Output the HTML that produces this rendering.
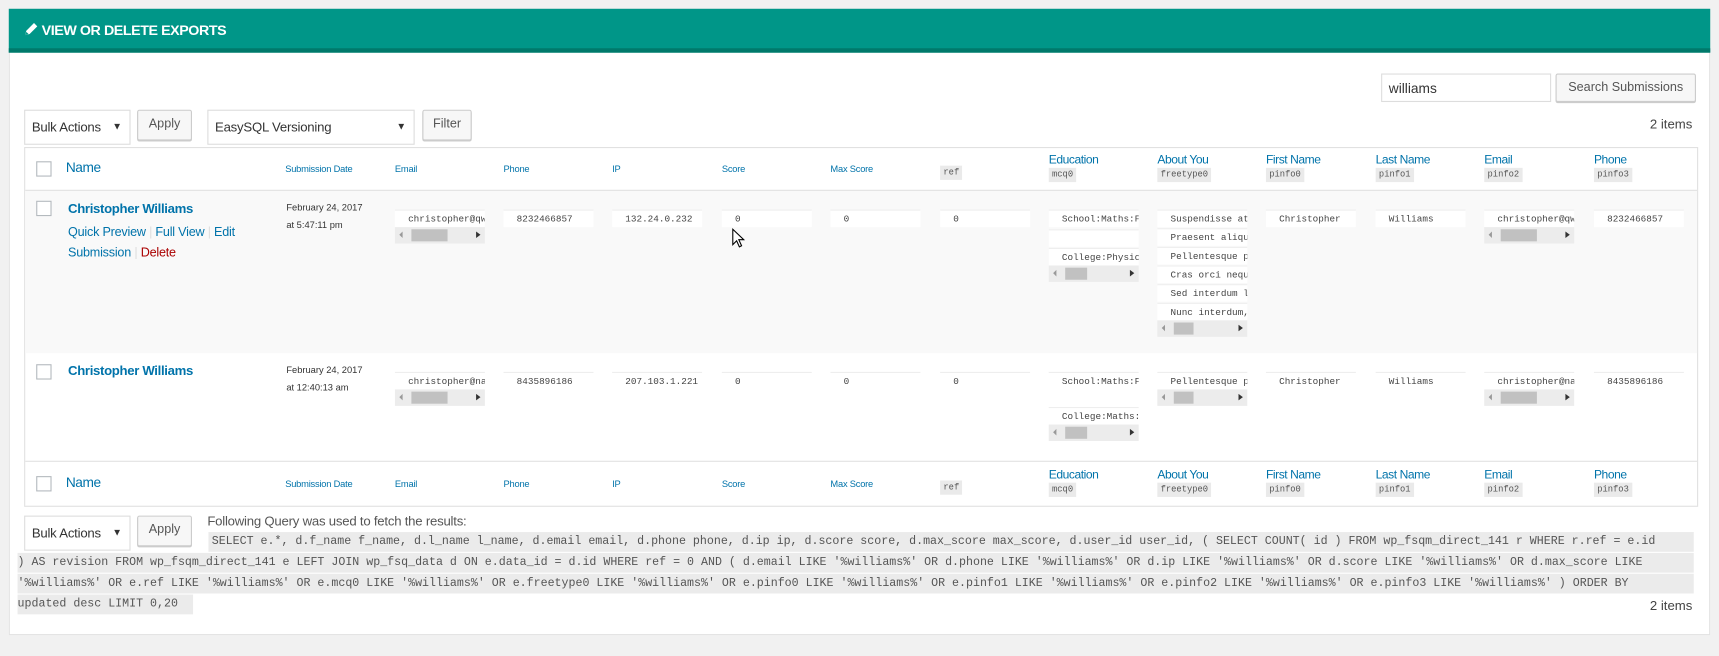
<!DOCTYPE html>
<html><head><meta charset="utf-8"><style>
html,body{margin:0;padding:0;background:#f1f1f1;width:1719px;height:656px;overflow:hidden}
#w{position:absolute;left:0;top:0;width:1567px;height:598px;transform:scale(1.097);transform-origin:0 0;font-family:"Liberation Sans",sans-serif;color:#444}
.a{position:absolute;white-space:nowrap}
#panel{left:8px;top:8px;width:1551px;height:571px;background:#fff;border:1px solid #e2e2e2;box-sizing:border-box}
#hd{left:8px;top:8px;width:1551px;height:36px;background:#009688;border-bottom:4px solid #00796b}
#hd span{position:absolute;left:30px;top:12px;color:#fff;font-weight:bold;font-size:13px;letter-spacing:-.4px}
.btn{background:#f7f7f7;border:1px solid #ccc;border-radius:2px;box-shadow:0 1px 0 #ccc;font-size:11.5px;color:#555;text-align:center;box-sizing:border-box}
.sel{background:#fff;border:1px solid #ddd;font-size:12px;color:#333;box-sizing:border-box;padding:8px 0 0 6px;letter-spacing:-.2px}
.sel i{position:absolute;right:7px;top:9px;font-style:normal;font-size:9px}
.cb{width:14px;height:14px;border:1px solid #b4b9be;background:#fff;box-sizing:border-box}
.lk{color:#0073aa}
.th{font-size:8.5px;color:#0073aa;letter-spacing:-.2px}
.th2{font-size:11px;color:#0073aa;letter-spacing:-.4px}
.code{font-family:"Liberation Mono",monospace;font-size:8px;background:#eaeaea;color:#555;padding:2px 3px}
.in{width:82px;height:16px;background:#fff;border-top:1px solid #eee;font-family:"Liberation Mono",monospace;font-size:8.5px;color:#444;line-height:16px;box-sizing:border-box;padding-left:12px;white-space:nowrap;overflow:hidden}
.sb{width:82px;height:15px;background:#ececec}
.sb b{position:absolute;left:15px;top:2px;width:33px;height:11px;background:#c1c1c1}
.sb:before{content:"";position:absolute;left:4px;top:4px;border:3px solid transparent;border-right:3px solid #999;border-left:0}
.sb:after{content:"";position:absolute;right:4px;top:4px;border:3px solid transparent;border-left:4px solid #333;border-right:0}
.q{font-family:"Liberation Mono",monospace;font-size:10.6px;color:#555;background:#ebebeb;white-space:nowrap;height:18px;line-height:18px;overflow:hidden}
</style></head><body><div id="w">
<div id="panel" class="a"></div>
<div id="hd" class="a"><span><svg width="13" height="13" viewBox="0 0 13 13" style="position:absolute;left:-16px;top:0px"><path d="M1 12 L2 8 L9 1 L12 4 L5 11 Z" fill="#fff"/><path d="M1 12 L2 9 L4 11 Z" fill="#009688"/></svg>VIEW OR DELETE EXPORTS</span></div>

<div class="a" style="left:1259px;top:67px;width:155px;height:26px;background:#fff;border:1px solid #ddd;box-sizing:border-box;font-size:12.5px;color:#333;padding:6px 0 0 6px">williams</div>
<div class="a btn" style="left:1418px;top:67px;width:128px;height:26px;padding-top:6px">Search Submissions</div>
<div class="a" style="left:1504px;top:106px;font-size:12px;color:#444">2 items</div>

<div class="a sel" style="left:22px;top:100px;width:97px;height:32px">Bulk Actions<i>▼</i></div>
<div class="a btn" style="left:125px;top:100px;width:50px;height:28px;padding-top:6px">Apply</div>
<div class="a sel" style="left:189px;top:100px;width:189px;height:32px">EasySQL Versioning<i>▼</i></div>
<div class="a btn" style="left:385px;top:100px;width:45px;height:28px;padding-top:6px">Filter</div>

<div class="a" style="left:22px;top:134px;width:1526px;height:328px;border:1px solid #e1e1e1;box-sizing:border-box;background:#fff"></div>
<div class="a" style="left:23px;top:173px;width:1524px;height:148px;background:#f9f9f9;border-top:1px solid #e1e1e1"></div>
<div class="a" style="left:23px;top:420px;width:1524px;height:1px;background:#e1e1e1"></div>

<div class="a" style="left:0;top:0">
<div class="a cb" style="left:33px;top:147px"></div>
<div class="a th2" style="left:60px;top:146px;font-size:12.5px">Name</div>
<div class="a th" style="left:260px;top:149px">Submission Date</div>
<div class="a th" style="left:360px;top:149px">Email</div>
<div class="a th" style="left:459px;top:149px">Phone</div>
<div class="a th" style="left:558px;top:149px">IP</div>
<div class="a th" style="left:658px;top:149px">Score</div>
<div class="a th" style="left:757px;top:149px">Max Score</div>
<div class="a code" style="left:857px;top:151px">ref</div>
<div class="a th2" style="left:956px;top:140px">Education</div><div class="a code" style="left:956px;top:153px">mcq0</div>
<div class="a th2" style="left:1055px;top:140px">About You</div><div class="a code" style="left:1055px;top:153px">freetype0</div>
<div class="a th2" style="left:1154px;top:140px">First Name</div><div class="a code" style="left:1154px;top:153px">pinfo0</div>
<div class="a th2" style="left:1254px;top:140px">Last Name</div><div class="a code" style="left:1254px;top:153px">pinfo1</div>
<div class="a th2" style="left:1353px;top:140px">Email</div><div class="a code" style="left:1353px;top:153px">pinfo2</div>
<div class="a th2" style="left:1453px;top:140px">Phone</div><div class="a code" style="left:1453px;top:153px">pinfo3</div>
</div>
<div class="a" style="left:0;top:287px">
<div class="a cb" style="left:33px;top:147px"></div>
<div class="a th2" style="left:60px;top:146px;font-size:12.5px">Name</div>
<div class="a th" style="left:260px;top:149px">Submission Date</div>
<div class="a th" style="left:360px;top:149px">Email</div>
<div class="a th" style="left:459px;top:149px">Phone</div>
<div class="a th" style="left:558px;top:149px">IP</div>
<div class="a th" style="left:658px;top:149px">Score</div>
<div class="a th" style="left:757px;top:149px">Max Score</div>
<div class="a code" style="left:857px;top:151px">ref</div>
<div class="a th2" style="left:956px;top:140px">Education</div><div class="a code" style="left:956px;top:153px">mcq0</div>
<div class="a th2" style="left:1055px;top:140px">About You</div><div class="a code" style="left:1055px;top:153px">freetype0</div>
<div class="a th2" style="left:1154px;top:140px">First Name</div><div class="a code" style="left:1154px;top:153px">pinfo0</div>
<div class="a th2" style="left:1254px;top:140px">Last Name</div><div class="a code" style="left:1254px;top:153px">pinfo1</div>
<div class="a th2" style="left:1353px;top:140px">Email</div><div class="a code" style="left:1353px;top:153px">pinfo2</div>
<div class="a th2" style="left:1453px;top:140px">Phone</div><div class="a code" style="left:1453px;top:153px">pinfo3</div>
</div>

<div class="a cb" style="left:33px;top:183px"></div>
<div class="a lk" style="left:62px;top:183px;font-size:12px;font-weight:bold;letter-spacing:-.3px">Christopher Williams</div>
<div class="a lk" style="left:62px;top:203px;font-size:11.5px;line-height:19px;letter-spacing:-.2px">Quick Preview <span style="color:#ddd">|</span> Full View <span style="color:#ddd">|</span> Edit<br>Submission <span style="color:#ddd">|</span> <span style="color:#a00">Delete</span></div>
<div class="a" style="left:261px;top:181px;font-size:8.5px;color:#333;line-height:16px">February 24, 2017<br>at 5:47:11 pm</div>
<div class="a in" style="left:360px;top:191px">christopher@qw</div><div class="a sb" style="left:360px;top:207px"><b></b></div>
<div class="a in" style="left:459px;top:191px">8232466857</div>
<div class="a in" style="left:558px;top:191px">132.24.0.232</div>
<div class="a in" style="left:658px;top:191px">0</div>
<div class="a in" style="left:757px;top:191px">0</div>
<div class="a in" style="left:857px;top:191px">0</div>
<div class="a in" style="left:956px;top:191px">School:Maths:F</div>
<div class="a in" style="left:956px;top:209px"></div>
<div class="a in" style="left:956px;top:226px">College:Physic</div><div class="a sb" style="left:956px;top:242px"><b style="width:20px"></b></div>
<div class="a in" style="left:1055px;top:191px">Suspendisse at</div>
<div class="a in" style="left:1055px;top:208px">Praesent aliqu</div>
<div class="a in" style="left:1055px;top:225px">Pellentesque p</div>
<div class="a in" style="left:1055px;top:242px">Cras orci nequ</div>
<div class="a in" style="left:1055px;top:259px">Sed interdum l</div>
<div class="a in" style="left:1055px;top:276px">Nunc interdum,</div><div class="a sb" style="left:1055px;top:292px"><b style="width:18px"></b></div>
<div class="a in" style="left:1154px;top:191px">Christopher</div>
<div class="a in" style="left:1254px;top:191px">Williams</div>
<div class="a in" style="left:1353px;top:191px">christopher@qw</div><div class="a sb" style="left:1353px;top:207px"><b></b></div>
<div class="a in" style="left:1453px;top:191px">8232466857</div>

<div class="a cb" style="left:33px;top:332px"></div>
<div class="a lk" style="left:62px;top:331px;font-size:12px;font-weight:bold;letter-spacing:-.3px">Christopher Williams</div>
<div class="a" style="left:261px;top:329px;font-size:8.5px;color:#333;line-height:16px">February 24, 2017<br>at 12:40:13 am</div>
<div class="a in" style="left:360px;top:339px">christopher@na</div><div class="a sb" style="left:360px;top:355px"><b></b></div>
<div class="a in" style="left:459px;top:339px">8435896186</div>
<div class="a in" style="left:558px;top:339px">207.103.1.221</div>
<div class="a in" style="left:658px;top:339px">0</div>
<div class="a in" style="left:757px;top:339px">0</div>
<div class="a in" style="left:857px;top:339px">0</div>
<div class="a in" style="left:956px;top:339px">School:Maths:F</div>
<div class="a in" style="left:956px;top:371px">College:Maths:</div><div class="a sb" style="left:956px;top:387px"><b style="width:20px"></b></div>
<div class="a in" style="left:1055px;top:339px">Pellentesque p</div><div class="a sb" style="left:1055px;top:355px"><b style="width:18px"></b></div>
<div class="a in" style="left:1154px;top:339px">Christopher</div>
<div class="a in" style="left:1254px;top:339px">Williams</div>
<div class="a in" style="left:1353px;top:339px">christopher@na</div><div class="a sb" style="left:1353px;top:355px"><b></b></div>
<div class="a in" style="left:1453px;top:339px">8435896186</div>

<div class="a sel" style="left:22px;top:470px;width:97px;height:32px">Bulk Actions<i>▼</i></div>
<div class="a btn" style="left:125px;top:470px;width:50px;height:28px;padding-top:6px">Apply</div>
<div class="a" style="left:189px;top:468px;font-size:12px;color:#555;letter-spacing:-.2px">Following Query was used to fetch the results:</div>
<div class="a q" style="left:190px;top:485px;width:1354px;padding-left:3px;box-sizing:border-box">SELECT e.*, d.f_name f_name, d.l_name l_name, d.email email, d.phone phone, d.ip ip, d.score score, d.max_score max_score, d.user_id user_id, ( SELECT COUNT( id ) FROM wp_fsqm_direct_141 r WHERE r.ref = e.id</div>
<div class="a q" style="left:16px;top:504px;width:1528px">) AS revision FROM wp_fsqm_direct_141 e LEFT JOIN wp_fsq_data d ON e.data_id = d.id WHERE ref = 0 AND ( d.email LIKE '%williams%' OR d.phone LIKE '%williams%' OR d.ip LIKE '%williams%' OR d.score LIKE '%williams%' OR d.max_score LIKE</div>
<div class="a q" style="left:16px;top:523px;width:1528px">'%williams%' OR e.ref LIKE '%williams%' OR e.mcq0 LIKE '%williams%' OR e.freetype0 LIKE '%williams%' OR e.pinfo0 LIKE '%williams%' OR e.pinfo1 LIKE '%williams%' OR e.pinfo2 LIKE '%williams%' OR e.pinfo3 LIKE '%williams%' ) ORDER BY</div>
<div class="a q" style="left:16px;top:542px;width:160px">updated desc LIMIT 0,20</div>
<div class="a" style="left:1504px;top:545px;font-size:12px;color:#444">2 items</div>

<svg class="a" style="left:667px;top:208px" width="12" height="19" viewBox="0 0 12 19"><path d="M1 1 L1 15 L4.5 11.5 L7 17 L9 16 L6.5 10.5 L11 10.5 Z" fill="#fff" stroke="#000" stroke-width="1"/></svg>
</div></body></html>
